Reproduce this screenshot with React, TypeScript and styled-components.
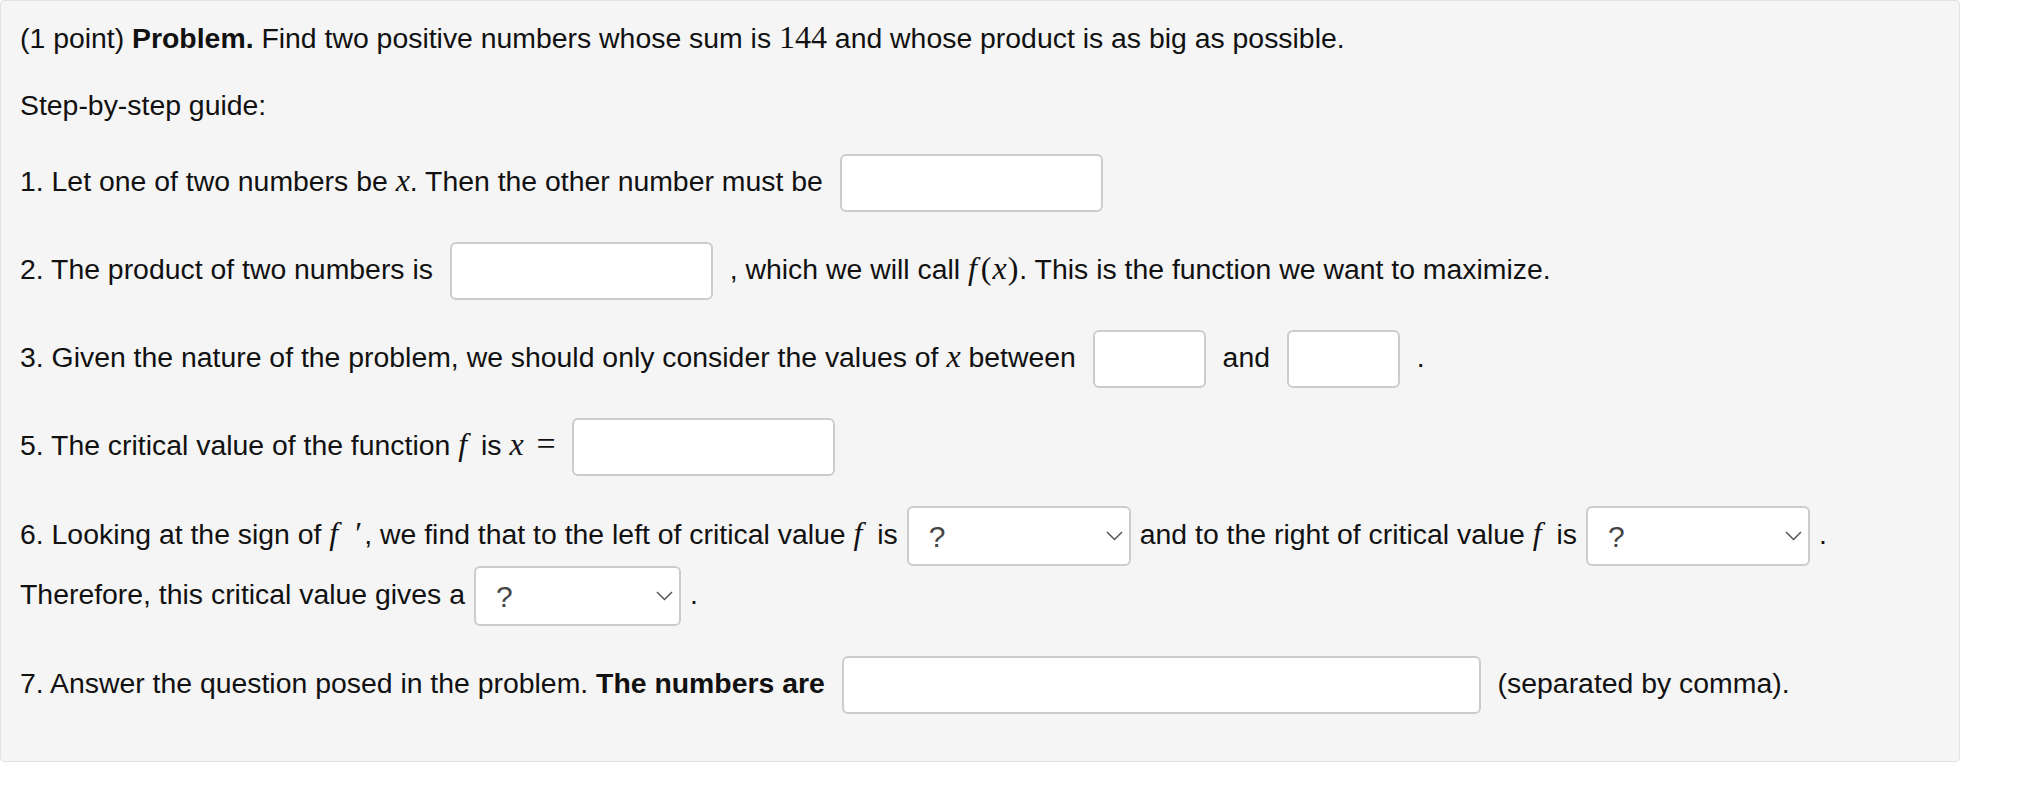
import React from "react";
import styled, { createGlobalStyle } from "styled-components";

const GlobalStyle = createGlobalStyle`
  body {
    margin: 0;
    background: #ffffff;
    font-family: "Liberation Sans", Arial, Helvetica, sans-serif;
    color: #111111;
  }
`;

const ProblemPanel = styled.div`
  width: 1960px;
  box-sizing: border-box;
  background: #f5f5f5;
  border: 1px solid #e2e2e2;
  border-radius: 4px;
  padding: 18px 19px 47px;
  font-size: 28.4px;
`;

const Para = styled.div`
  line-height: 37px;
  margin-bottom: 30px;

  &:last-child {
    margin-bottom: 0;
  }
`;

const MathVar = styled.span<{ $gap?: number }>`
  font-family: "Liberation Serif", "Times New Roman", serif;
  font-style: italic;
  font-size: 32px;
  padding-right: ${(p) => p.$gap ?? 0}px;
`;

const MathNum = styled.span<{ $pad?: number }>`
  font-family: "Liberation Serif", "Times New Roman", serif;
  font-size: 32px;
  padding: 0 ${(p) => p.$pad ?? 0}px;
`;

const Prime = styled.span`
  font-family: "Liberation Serif", "Times New Roman", serif;
  font-size: 32px;
  margin-left: 17px;
  margin-right: 2px;
`;

const MathOp = styled.span`
  font-family: "Liberation Serif", "Times New Roman", serif;
  font-size: 34px;
  margin: 0 7px 0 13px;
`;

const AnswerInput = styled.input<{ $w: number }>`
  display: inline-block;
  vertical-align: middle;
  box-sizing: border-box;
  width: ${(p) => p.$w}px;
  height: 58px;
  margin: 0 9px;
  padding: 0 12px;
  background: #ffffff;
  border: 2px solid #cccccc;
  border-radius: 6px;
  font-family: inherit;
  font-size: 28px;
  outline: none;
`;

const SelectWrap = styled.span<{ $w: number }>`
  display: inline-block;
  vertical-align: middle;
  position: relative;
  width: ${(p) => p.$w}px;
  height: 60px;
  margin: 0 9px;
`;

const ChoiceSelect = styled.select`
  appearance: none;
  -webkit-appearance: none;
  box-sizing: border-box;
  width: 100%;
  height: 100%;
  padding: 0 0 0 20px;
  background: #ffffff;
  border: 2px solid #cccccc;
  border-radius: 6px;
  font-family: "Liberation Sans", Arial, sans-serif;
  font-size: 30px;
  color: #444444;
  outline: none;
`;

const Chevron = styled.svg`
  position: absolute;
  right: 8px;
  top: 25px;
  pointer-events: none;
`;

const Choice = ({ w }: { w: number }) => (
  <SelectWrap $w={w}>
    <ChoiceSelect defaultValue="?">
      <option value="?">?</option>
      <option>increasing</option>
      <option>decreasing</option>
    </ChoiceSelect>
    <Chevron width="17" height="10" viewBox="0 0 17 10">
      <path d="M1 1 L8.5 8.5 L16 1" fill="none" stroke="#555" strokeWidth="1.5" />
    </Chevron>
  </SelectWrap>
);

export default function App() {
  return (
    <>
      <GlobalStyle />
      <ProblemPanel>
        <Para>
          (1 point) <b>Problem.</b> Find two positive numbers whose sum is{" "}
          <MathNum>144</MathNum> and whose product is as big as possible.
        </Para>
        <Para>Step-by-step guide:</Para>
        <Para>
          1. Let one of two numbers be <MathVar>x</MathVar>. Then the other
          number must be <AnswerInput $w={263} />
        </Para>
        <Para>
          2. The product of two numbers is <AnswerInput $w={263} /> , which we
          will call <MathVar $gap={3}>f</MathVar>
          <MathNum $pad={1}>(</MathNum>
          <MathVar>x</MathVar>
          <MathNum $pad={1}>)</MathNum>. This is the function we want to
          maximize.
        </Para>
        <Para>
          3. Given the nature of the problem, we should only consider the values
          of <MathVar>x</MathVar> between <AnswerInput $w={113} /> and{" "}
          <AnswerInput $w={113} /> .
        </Para>
        <Para>
          5. The critical value of the function <MathVar $gap={6}>f</MathVar> is{" "}
          <MathVar>x</MathVar>
          <MathOp>=</MathOp>
          <AnswerInput $w={263} />
        </Para>
        <Para>
          6. Looking at the sign of <MathVar>f</MathVar>
          <Prime>′</Prime>, we find that to the left of critical value{" "}
          <MathVar $gap={7}>f</MathVar> is
          <Choice w={224} />
          and to the right of critical value <MathVar $gap={7}>f</MathVar> is
          <Choice w={224} />.
          <br />
          Therefore, this critical value gives a
          <Choice w={207} />.
        </Para>
        <Para>
          7. Answer the question posed in the problem. <b>The numbers are</b>{" "}
          <AnswerInput $w={639} /> (separated by comma).
        </Para>
      </ProblemPanel>
    </>
  );
}
